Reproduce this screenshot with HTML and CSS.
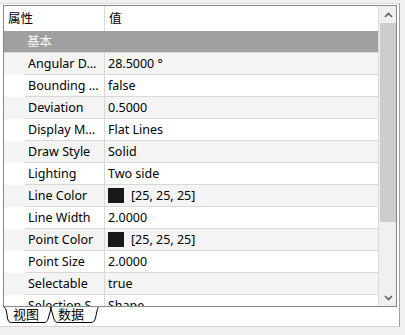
FILE: index.html
```html
<!DOCTYPE html>
<html>
<head>
<meta charset="utf-8">
<link rel="stylesheet" href="styles.css">
</head>
<body>
<div class="dock">
  <div class="view">
    <div class="viewport">
      <div class="hdr"><div class="hc1">属性</div><div class="hc2">值</div></div>
      <div class="group">基本</div>
      <div class="row odd"><div class="gut"></div><div class="name">Angular D…</div><div class="val">28.5000 °</div></div>
      <div class="row"><div class="gut"></div><div class="name">Bounding …</div><div class="val">false</div></div>
      <div class="row odd"><div class="gut"></div><div class="name">Deviation</div><div class="val">0.5000</div></div>
      <div class="row"><div class="gut"></div><div class="name">Display M…</div><div class="val">Flat Lines</div></div>
      <div class="row odd"><div class="gut"></div><div class="name">Draw Style</div><div class="val">Solid</div></div>
      <div class="row"><div class="gut"></div><div class="name">Lighting</div><div class="val">Two side</div></div>
      <div class="row odd"><div class="gut"></div><div class="name">Line Color</div><div class="val"><span class="sw"></span>[25, 25, 25]</div></div>
      <div class="row"><div class="gut"></div><div class="name">Line Width</div><div class="val">2.0000</div></div>
      <div class="row odd"><div class="gut"></div><div class="name">Point Color</div><div class="val"><span class="sw"></span>[25, 25, 25]</div></div>
      <div class="row"><div class="gut"></div><div class="name">Point Size</div><div class="val">2.0000</div></div>
      <div class="row odd"><div class="gut"></div><div class="name">Selectable</div><div class="val">true</div></div>
      <div class="row"><div class="gut"></div><div class="name">Selection S…</div><div class="val">Shape</div></div>
    </div>
    <div class="sbar">
      <div class="arr"><svg width="9" height="6" viewBox="0 0 9 6"><path d="M1 5 L4.5 1.5 L8 5" fill="none" stroke="#606060" stroke-width="1.6"/></svg></div>
      <div class="track"><div class="thumb"></div></div>
      <div class="arr"><svg width="9" height="6" viewBox="0 0 9 6"><path d="M1 1 L4.5 4.5 L8 1" fill="none" stroke="#606060" stroke-width="1.6"/></svg></div>
    </div>
  </div>
  <div class="tabs">
    <div class="tab t1"><span class="tl">视图</span><svg class="tshape" width="49" height="16" viewBox="0 0 49 16"><path d="M0.5 0 C2.5 0.5 3 2 3.5 5 L4.5 11 C5 14 6 15.5 8.5 15.5 L41 15.5 C43 15.5 44 14.5 45 12 L48.5 0" fill="none" stroke="#000"/></svg></div>
    <div class="tab t2"><span class="tl">数据</span><svg class="tshape" width="49" height="16" viewBox="0 0 49 16"><path d="M0.5 0 L4 12 C5 14.5 6 15.5 8.5 15.5 L41 15.5 C43.5 15.5 44.5 14 45.5 11 L47 4 C47.5 1.5 48 0.5 48.5 0" fill="none" stroke="#000"/></svg></div>
  </div>
</div>
</body>
</html>
```
FILE: styles.css
```css
* { box-sizing: border-box; }
html, body { margin: 0; padding: 0; }
body {
  background: #f0f0f0;
  width: 405px;
  height: 335px;
  overflow: hidden;
  font-family: "Noto Sans", "Noto Sans CJK SC", sans-serif;
  font-size: 12.5px;
  color: #000;
}
.dock {
  margin-top: 3px;
  width: 400px;
  height: 324px;
  background: #fff;
  border-top: 1px solid #dcdcdc;
  border-right: 1px solid #a0a0a0;
  border-bottom: 1px solid #d4d4d4;
  padding: 1px 2px 0 3px;
}
.view {
  display: flex;
  height: 302px;
  border: 1px solid #828790;
  overflow: hidden;
}
.viewport {
  width: 374px;
  overflow: hidden;
  background: #fff;
}
.hdr {
  display: flex;
  height: 25px;
  background: #fff;
}
.hc1 {
  width: 101px;
  border-right: 1px solid #d8d8d8;
  padding-left: 4px;
  line-height: 25px;
}
.hc2 {
  flex: 1;
  padding-left: 4px;
  line-height: 25px;
}
.group {
  height: 22px;
  background: #a0a0a0;
  color: #f8f8f8;
  padding-left: 23px;
  line-height: 21px;
  border-bottom: 1px solid #d8d8d8;
  background-clip: padding-box;
  display: flex;
}
.row {
  display: flex;
  height: 22px;
  background: #fff;
}
.row.odd { background: #f4f4f4; }
.gut { width: 21px; flex: none; }
.name {
  width: 80px;
  flex: none;
  border-right: 1px solid #d8d8d8;
  border-bottom: 1px solid #d8d8d8;
  padding-left: 3px;
  line-height: 21px;
  white-space: nowrap;
  overflow: hidden;
}
.val {
  flex: 1;
  border-bottom: 1px solid #d8d8d8;
  padding-left: 3px;
  line-height: 21px;
  white-space: nowrap;
  display: flex;
  align-items: center;
}
.sw {
  display: inline-block;
  width: 16px;
  height: 15px;
  background: #191919;
  margin-right: 7px;
}
.sbar {
  width: 18px;
  flex: none;
  border-left: 1px solid #dcdcdc;
  background: #f0f0f0;
  display: flex;
  flex-direction: column;
}
.arr {
  height: 17px;
  display: flex;
  align-items: center;
  justify-content: center;
  padding-left: 1px;
}
.track {
  flex: 1;
  padding-left: 1px;
}
.thumb {
  height: 199px;
  background: #cdcdcd;
}
.tabs {
  display: flex;
  height: 16px;
}
.tab {
  position: relative;
  width: 49px;
  height: 16px;
  font-size: 13px;
  line-height: 15px;
}
.t1 { padding-left: 10px; }
.t2 { margin-left: -2px; padding-left: 8px; }
.tl { display: inline-block; }
.tshape {
  position: absolute;
  left: 0;
  top: 0;
}
```
